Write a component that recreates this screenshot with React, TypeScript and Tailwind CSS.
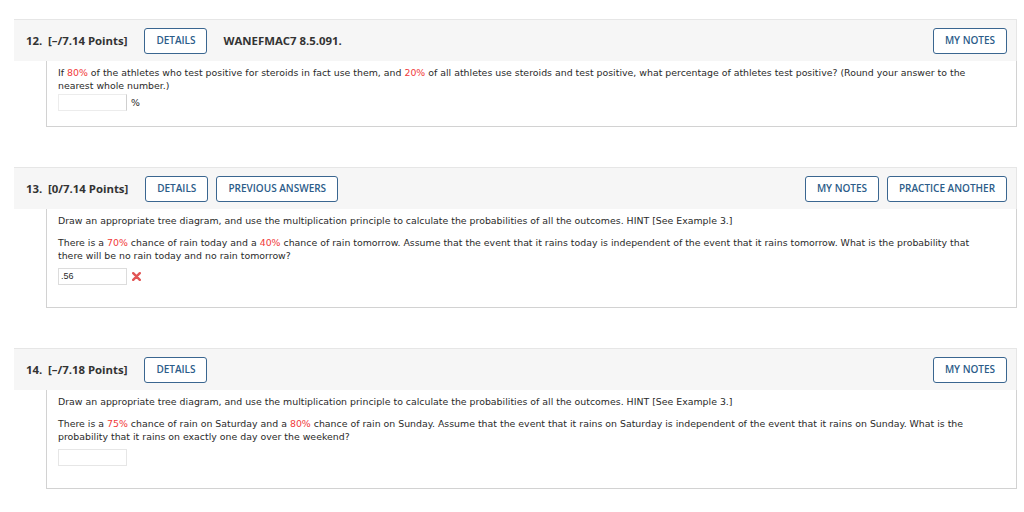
import React from 'react';

const Btn = ({ children, w }: { children: React.ReactNode; w: string }) => (
  <button
    className={`h-[26px] ${w} rounded-[3px] border-[1.5px] border-[#3a6690] bg-white text-[10px] font-semibold text-[#2c5c89] font-['Open_Sans',sans-serif] flex items-center justify-center`}
  >
    {children}
  </button>
);

const Red = ({ children }: { children: React.ReactNode }) => <span className="text-[#f03a3a]">{children}</span>;

const Header = ({ num, points, left, right }: { num: string; points: string; left: React.ReactNode; right: React.ReactNode }) => (
  <div className="h-[42px] bg-[#f6f6f6] border-t border-r border-[#e6e6e6] flex items-center pl-[12px] pr-[9px]">
    <div className="flex items-center text-[11.4px] font-bold text-[#333] font-['Open_Sans',sans-serif]">
      <span className="w-[22px]">{num}</span>
      <span>{points}</span>
    </div>
    <div className="flex items-center gap-[8px] ml-[17px]">{left}</div>
    <div className="flex-1" />
    <div className="flex items-center gap-[8px]">{right}</div>
  </div>
);

const Body = ({ children, h }: { children: React.ReactNode; h: string }) => (
  <div className={`ml-[32px] ${h} border-l border-r border-b border-[#d2d2d2] bg-white pl-[11px] pr-[40px] pt-[5px] text-[9.4px] leading-[13px] text-[#2a2a2a] font-['DejaVu_Sans',sans-serif]`}>
    {children}
  </div>
);

export default function App() {
  return (
    <div className="w-[1024px] h-[512px] bg-white pt-[19px] pl-[14px] pr-[7px] flex flex-col gap-[40px]">
      <div>
        <Header
          num="12."
          points="[–/7.14 Points]"
          left={
            <>
              <Btn w="w-[63px]">DETAILS</Btn>
              <span className="ml-[8px] text-[11.4px] font-bold text-[#333] font-['Open_Sans',sans-serif]">WANEFMAC7 8.5.091.</span>
            </>
          }
          right={<Btn w="w-[74px]">MY NOTES</Btn>}
        />
        <Body h="h-[66px]">
          <p>
            If <Red>80%</Red> of the athletes who test positive for steroids in fact use them, and <Red>20%</Red> of all athletes use steroids and test positive, what percentage of athletes test positive? (Round your answer to the nearest whole number.)
          </p>
          <div className="flex items-center mt-[2px]">
            <div className="w-[69px] h-[17px] border border-[#ececec] border-r-[#cfcfcf]" />
            <span className="ml-[4px]">%</span>
          </div>
        </Body>
      </div>

      <div>
        <Header
          num="13."
          points="[0/7.14 Points]"
          left={
            <>
              <Btn w="w-[63px]">DETAILS</Btn>
              <Btn w="w-[122px]">PREVIOUS ANSWERS</Btn>
            </>
          }
          right={
            <>
              <Btn w="w-[74px]">MY NOTES</Btn>
              <Btn w="w-[120px]">PRACTICE ANOTHER</Btn>
            </>
          }
        />
        <Body h="h-[99px]">
          <p>Draw an appropriate tree diagram, and use the multiplication principle to calculate the probabilities of all the outcomes. HINT [See Example 3.]</p>
          <p className="mt-[9px]">
            There is a <Red>70%</Red> chance of rain today and a <Red>40%</Red> chance of rain tomorrow. Assume that the event that it rains today is independent of the event that it rains tomorrow. What is the probability that there will be no rain today and no rain tomorrow?
          </p>
          <div className="flex items-center mt-[6px]">
            <div className="w-[69px] h-[17px] border border-[#dcdcdc] flex items-center pl-[2px] text-[9px] font-['Liberation_Sans',sans-serif]">.56</div>
            <svg className="ml-[5px]" width="9" height="9" viewBox="0 0 9 9">
              <path d="M1.2 1.2 L7.8 7.8 M7.8 1.2 L1.2 7.8" stroke="#e25555" strokeWidth="2.4" strokeLinecap="round" />
            </svg>
          </div>
        </Body>
      </div>

      <div>
        <Header
          num="14."
          points="[–/7.18 Points]"
          left={<Btn w="w-[63px]">DETAILS</Btn>}
          right={<Btn w="w-[74px]">MY NOTES</Btn>}
        />
        <Body h="h-[99px]">
          <p>Draw an appropriate tree diagram, and use the multiplication principle to calculate the probabilities of all the outcomes. HINT [See Example 3.]</p>
          <p className="mt-[9px]">
            There is a <Red>75%</Red> chance of rain on Saturday and a <Red>80%</Red> chance of rain on Sunday. Assume that the event that it rains on Saturday is independent of the event that it rains on Sunday. What is the probability that it rains on exactly one day over the weekend?
          </p>
          <div className="flex items-center mt-[6px]">
            <div className="w-[69px] h-[17px] border border-[#e6e6e6]" />
          </div>
        </Body>
      </div>
    </div>
  );
}
